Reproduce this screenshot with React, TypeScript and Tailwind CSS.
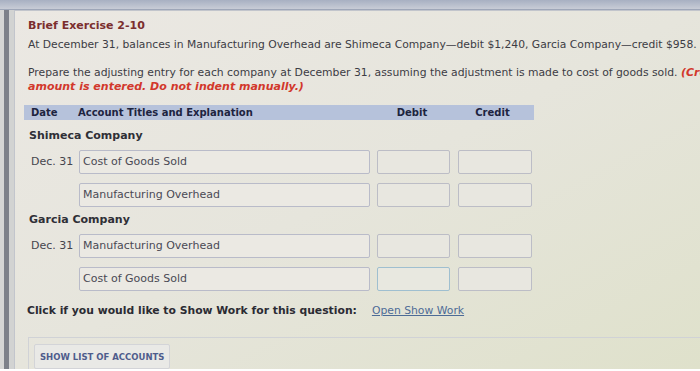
const rows = [
  {
    company: "Shimeca Company",
    lines: [
      { date: "Dec. 31", account: "Cost of Goods Sold" },
      { date: "", account: "Manufacturing Overhead" },
    ],
  },
  {
    company: "Garcia Company",
    lines: [
      { date: "Dec. 31", account: "Manufacturing Overhead" },
      { date: "", account: "Cost of Goods Sold", focused: true },
    ],
  },
];

function EntryRow({ date, account, focused }: { date: string; account: string; focused?: boolean }) {
  return (
    <div className="flex h-[24px] items-center">
      <div className="w-[55px] pl-[7px] text-[#45454d]">{date}</div>
      <div className="flex h-[24px] w-[291px] items-center rounded-[2px] border border-[#b9bbc9] bg-[#ebe9e3] pl-[3px] text-[#4a4a55]">
        {account}
      </div>
      <div
        className={
          focused
            ? "ml-[7px] h-[24px] w-[73px] rounded-[2px] border border-[#9fbfd0] bg-[#e8e8e0]"
            : "ml-[7px] h-[24px] w-[73px] rounded-[2px] border border-[#bcbdc6] bg-[#e8e7e0]"
        }
      />
      <div className="ml-[8px] h-[24px] w-[74px] rounded-[2px] border border-[#bcbdc6] bg-[#e8e7e0]" />
    </div>
  );
}

export default function App() {
  return (
    <div
      className="flex h-[371px] w-[700px] flex-col overflow-hidden bg-white text-[11px] leading-[14px]"
      style={{ fontFamily: '"DejaVu Sans", Verdana, sans-serif' }}
    >
      {/* top frame strip */}
      <div className="h-[10px] shrink-0 border-b border-[#9ea6b8] bg-gradient-to-b from-[#a8b0c2] to-[#c8ccd6]" />
      <div className="flex min-h-0 flex-1">
        {/* left frame strip */}
        <div className="flex w-[14px] shrink-0">
          <div className="w-[4px] bg-[#d6d6d4]" />
          <div className="w-[5px] bg-[#7e8189]" />
          <div className="w-[5px] bg-[#d2d3d2]" />
        </div>
        <div className="flex min-w-0 flex-1 flex-col border-l border-t border-[#c2c5cc] bg-gradient-to-br from-[#ebe8e3] via-[#e6e5dc] to-[#dfe1cb] pl-[9px] pt-[8px]">
          <div className="ml-[4px] whitespace-nowrap text-[11px] font-bold text-[#7b2e2e]">Brief Exercise 2-10</div>
          <div className="ml-[4px] mt-[5px] whitespace-nowrap text-[10.75px] text-[#3c3c44]">
            At December 31, balances in Manufacturing Overhead are Shimeca Company—debit $1,240, Garcia Company—credit $958.
          </div>
          <div className="ml-[4px] mt-[14px] whitespace-nowrap text-[10.8px] text-[#3c3c44]">
            Prepare the adjusting entry for each company at December 31, assuming the adjustment is made to cost of goods sold.{" "}
            <span className="text-[11px] font-bold italic text-[#d2382c]">(Credit account titles are automatically indented when</span>
          </div>
          <div className="ml-[4px] whitespace-nowrap font-bold italic text-[#d2382c]">
            amount is entered. Do not indent manually.)
          </div>

          {/* table header */}
          <div className="mt-[11px] flex h-[19px] w-[510px] items-center bg-[#b6c2db] text-[10px] font-bold text-[#1d2440]">
            <div className="w-[54px] pl-[7px]">Date</div>
            <div className="w-[295px]">Account Titles and Explanation</div>
            <div className="w-[78px] text-center">Debit</div>
            <div className="w-[83px] text-center">Credit</div>
          </div>

          {rows.map((group, gi) => (
            <div key={group.company} className={gi === 0 ? "mt-[9px]" : "mt-[6px]"}>
              <div className="ml-[5px] font-bold text-[#2f2f36]">{group.company}</div>
              <div className="mt-[7px] flex flex-col gap-[9px]">
                {group.lines.map((l, i) => (
                  <EntryRow key={i} date={l.date} account={l.account} focused={l.focused} />
                ))}
              </div>
            </div>
          ))}

          <div className="ml-[3px] mt-[13px] flex items-center whitespace-nowrap text-[10.8px]">
            <span className="font-bold text-[#2b2b33]">Click if you would like to Show Work for this question:</span>
            <span className="ml-[15px] text-[#4d6b96] underline">Open Show Work</span>
          </div>

          <div className="ml-[4px] mt-[19px] flex-1 border-l border-t border-[#d0d2d6] pl-[5px] pt-[6px]">
            <div className="inline-flex h-[25px] items-center rounded-[2px] border border-[#d3d4d8] bg-[#e9e9e6] px-[5px] text-[8.5px] font-bold text-[#4e5c8c]">
              SHOW LIST OF ACCOUNTS
            </div>
          </div>
        </div>
      </div>
      <div className="h-[2px] shrink-0 bg-white" />
    </div>
  );
}
